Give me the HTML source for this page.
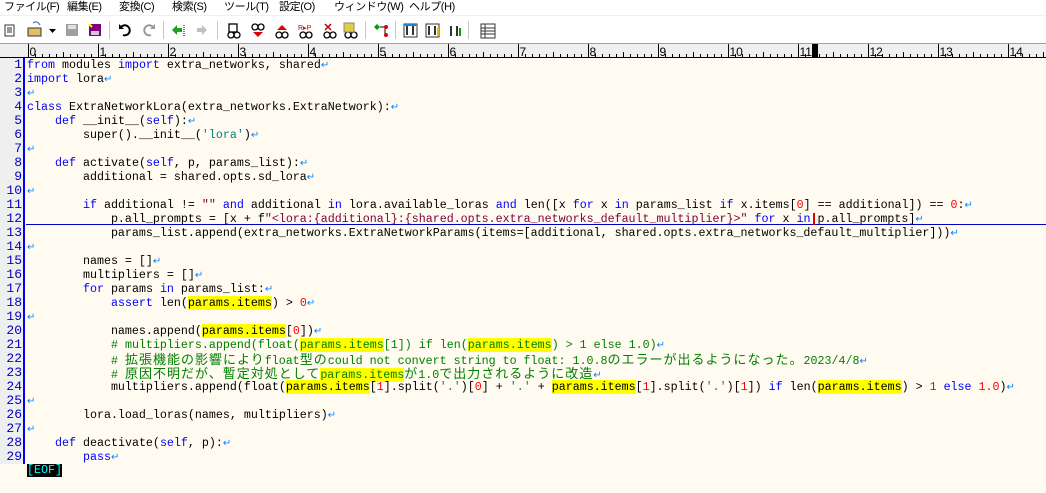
<!DOCTYPE html>
<html><head><meta charset="utf-8"><style>
*{margin:0;padding:0;box-sizing:border-box}
body{width:1046px;height:493px;overflow:hidden;background:#fffbf0;position:relative;font-family:"Liberation Sans","Noto Sans CJK JP",sans-serif}
#menu{position:absolute;left:0;top:0;width:1046px;height:16px;background:#fff;border-bottom:1px solid #f0f0f0;font-size:12px;color:#000}
#menu span{position:absolute;top:0px;line-height:15px;font-family:"Liberation Sans","Noto Sans CJK JP",sans-serif;font-size:11px;letter-spacing:-0.4px;white-space:nowrap}
#tb{position:absolute;left:0;top:16px;width:1046px;height:27px;background:#fff}
#ruler{position:absolute;left:0;top:43px;width:1046px;height:15px;background:#efefef;border-top:1px solid #a0a0a0;border-bottom:1px solid #000}
#gut{position:absolute;left:0;top:58px;width:25px;height:406px;background:#efefef;border-right:2px solid #0000ff}
.ln{position:absolute;left:0;width:22px;text-align:right;font-family:"Liberation Mono",monospace;font-size:13px;color:#0000c0;line-height:14px}
.l{position:absolute;left:27px;white-space:pre;font-family:"Liberation Mono","Noto Sans CJK JP",monospace;font-size:11.67px;line-height:14px;height:14px;color:#000}
.k{color:#0000ff}.c{color:#008000}.s{color:#800040}.q{color:#008080}.n{color:#ff0000}
.h{background:#ffff00}
.r{color:#0080ff;font-family:"DejaVu Sans",sans-serif;font-size:10px}
.j{font-family:"Noto Sans CJK JP",sans-serif;font-size:13px;letter-spacing:1px}
</style></head><body>
<div id="menu">
<span style="left:4px">ファイル(F)</span><span style="left:67px">編集(E)</span><span style="left:119px">変換(C)</span><span style="left:172px">検索(S)</span><span style="left:224px">ツール(T)</span><span style="left:279px">設定(O)</span><span style="left:334px">ウィンドウ(W)</span><span style="left:409px">ヘルプ(H)</span>
</div>
<div id="tb">
<svg width="520" height="27" style="position:absolute;left:0;top:0">
<g stroke="#333" fill="none" stroke-width="1">
<rect x="5" y="9" width="9" height="11" fill="#fff"/><path d="M7 12h5M7 14h5M7 16h5"/>
<rect x="28" y="12" width="13" height="8" fill="#e0c060"/><path d="M33 7q4-3 7 2" stroke="#2060c0"/>
</g>
<path d="M49 13h7l-3.5 4z" fill="#000"/>
<rect x="66" y="8" width="12" height="12" fill="#a0a0a0"/><rect x="68" y="9" width="8" height="4" fill="#e0e0e0"/>
<rect x="89" y="8" width="12" height="12" fill="#800080"/><rect x="91" y="15" width="8" height="4" fill="#ccc"/><path d="M89 8l3 3" stroke="#ff0" stroke-width="2"/>
<rect x="109" y="5" width="1" height="18" fill="#c8c8c8"/>
<path d="M121 11a5 5 0 1 1 2 8" stroke="#000" stroke-width="2" fill="none"/><path d="M119 8v5h5z" fill="#000"/>
<path d="M153 11a5 5 0 1 0 -2 8" stroke="#999" stroke-width="2" fill="none"/><path d="M155 8v5h-5z" fill="#999"/>
<rect x="163" y="5" width="1" height="18" fill="#c8c8c8"/>
<path d="M172 14l5-5v3h5v4h-5v3z" fill="#20a020"/><path d="M184 9v11" stroke="#000" stroke-dasharray="1 1"/>
<path d="M207 14l-5-5v3h-5v4h5v3z" fill="#c0c0c0"/>
<rect x="217" y="5" width="1" height="18" fill="#c8c8c8"/>
<g fill="none" stroke="#000" stroke-width="1.3">
<circle cx="231" cy="19" r="3"/><circle cx="237" cy="19" r="3"/><rect x="229" y="8" width="8" height="8"/>
<circle cx="255" cy="11" r="3"/><circle cx="261" cy="11" r="3"/>
<circle cx="279" cy="19" r="3"/><circle cx="285" cy="19" r="3"/>
<circle cx="303" cy="19" r="3"/><circle cx="309" cy="19" r="3"/>
<circle cx="327" cy="19" r="3"/><circle cx="333" cy="19" r="3"/>
<circle cx="348" cy="19" r="3"/><circle cx="354" cy="19" r="3"/>
</g>
<path d="M253 16h10l-5 5z" fill="#e00000"/><path d="M277 14h10l-5-5z" fill="#e00000"/>
<text x="298" y="14" font-size="7" fill="#c00000" font-family="Liberation Sans">R▸P</text>
<path d="M325 8l6 6M331 8l-6 6" stroke="#c00000" stroke-width="1.5"/>
<rect x="344" y="7" width="10" height="9" fill="#e0d040" stroke="#888"/>
<rect x="365" y="5" width="1" height="18" fill="#c8c8c8"/>
<path d="M374 11l3-3 3 3-3 3z" fill="#00a000"/><path d="M380 11h5v8" stroke="#000" fill="none"/><circle cx="386" cy="19" r="2" fill="#e00000"/><circle cx="386" cy="11" r="2" fill="#e00000"/>
<rect x="395" y="5" width="1" height="18" fill="#c8c8c8"/>
<rect x="404" y="8" width="13" height="13" fill="#fff" stroke="#333"/><path d="M407 10v9M413 10v9" stroke="#333" stroke-width="2"/><path d="M404 9h12" stroke="#2080e0" stroke-width="2"/>
<rect x="426" y="8" width="13" height="13" fill="#fff" stroke="#333"/><path d="M429 10v9M435 10v9" stroke="#333" stroke-width="2"/><path d="M438 12v8" stroke="#e0c000" stroke-width="2"/>
<path d="M451 10v10M457 10v10" stroke="#333" stroke-width="2"/><path d="M460 12v8" stroke="#00a000" stroke-width="2"/>
<rect x="468" y="5" width="1" height="18" fill="#c8c8c8"/>
<rect x="481" y="8" width="14" height="14" fill="#fff" stroke="#333"/><path d="M481 12h14M481 15h14M481 18h14M485 8v14" stroke="#333"/>
</svg>
</div>
<div id="ruler">
<svg width="1046" height="14" style="position:absolute;left:0;top:0" font-family="Liberation Sans" font-size="12">
<g stroke="#000" stroke-width="1" id="tk"></g>
<g id="rt"></g>
<rect x="812" y="0" width="6" height="13" fill="#000"/>
</svg>
</div>
<div id="gut"></div>
<div id="code"></div>
<div style="position:absolute;left:27px;top:464px;width:35px;height:13px;background:#000;color:#00ffff;font-family:'Liberation Mono',monospace;font-size:11.67px;line-height:13px">[EOF]</div>
<div style="position:absolute;left:26px;top:224px;width:1020px;height:1px;background:#0000c0"></div>
<div style="position:absolute;left:813px;top:213px;width:2px;height:12px;background:#e00000"></div>
<script>
var tk=document.getElementById('tk'),rt=document.getElementById('rt'),s='',t='';
for(var i=0;i<=146;i++){var x=28+i*7+0.5;if(i%10==0){s+='<line x1="'+x+'" y1="0" x2="'+x+'" y2="13"/>';t+='<text x="'+(x+1)+'" y="12">'+(i/10)+'</text>';}else if(i%5==0){s+='<line x1="'+x+'" y1="8" x2="'+x+'" y2="13"/>';}else{s+='<line x1="'+x+'" y1="10" x2="'+x+'" y2="13"/>';}}
tk.innerHTML=s;rt.innerHTML=t;
var R='<span class="r">↵</span>';
function K(a){return '<span class="k">'+a+'</span>'}
function N(a){return '<span class="n">'+a+'</span>'}
function H(a){return '<span class="h">'+a+'</span>'}
function J(a){return '<span class="j">'+a+'</span>'}
var P=H('params.items');
var L=[
K('from')+' modules '+K('import')+' extra_networks, shared',
K('import')+' lora',
'',
K('class')+' ExtraNetworkLora(extra_networks.ExtraNetwork):',
'    '+K('def')+' __init__('+K('self')+'):',
'        super().__init__(<span class="q">\'lora\'</span>)',
'',
'    '+K('def')+' activate('+K('self')+', p, params_list):',
'        additional = shared.opts.sd_lora',
'',
'        '+K('if')+' additional != <span class="s">""</span> '+K('and')+' additional '+K('in')+' lora.available_loras '+K('and')+' len([x '+K('for')+' x '+K('in')+' params_list '+K('if')+' x.items['+N('0')+'] == additional]) == '+N('0')+':',
'            p.all_prompts = [x + f<span class="s">"&lt;lora:{additional}:{shared.opts.extra_networks_default_multiplier}&gt;"</span> '+K('for')+' x '+K('in')+' p.all_prompts]',
'            params_list.append(extra_networks.ExtraNetworkParams(items=[additional, shared.opts.extra_networks_default_multiplier]))',
'',
'        names = []',
'        multipliers = []',
'        '+K('for')+' params '+K('in')+' params_list:',
'            '+K('assert')+' len('+P+') &gt; '+N('0'),
'',
'            names.append('+P+'['+N('0')+'])',
'            <span class="c"># multipliers.append(float('+P+'[1]) if len('+P+') &gt; 1 else 1.0)</span>',
'            <span class="c"># '+J('拡張機能の影響により')+'float'+J('型の')+'could not convert string to float: 1.0.8'+J('のエラーが出るようになった。')+'2023/4/8</span>',
'            <span class="c"># '+J('原因不明だが、暫定対処として')+P+J('が')+'1.0'+J('で出力されるように改造')+'</span>',
'            multipliers.append(float('+P+'['+N('1')+'].split(<span class="q">\'.\'</span>)['+N('0')+'] + <span class="q">\'.\'</span> + '+P+'['+N('1')+'].split(<span class="q">\'.\'</span>)['+N('1')+']) '+K('if')+' len('+P+') &gt; '+N('1')+' '+K('else')+' '+N('1.0')+')',
'',
'        lora.load_loras(names, multipliers)',
'',
'    '+K('def')+' deactivate('+K('self')+', p):',
'        '+K('pass')
];
var h='';
for(var i=0;i<L.length;i++){var y=58+i*14;h+='<div class="ln" style="top:'+y+'px">'+(i+1)+'</div><div class="l" style="top:'+y+'px">'+L[i]+R+'</div>';}
document.getElementById('code').innerHTML=h;
</script>
</body></html>
